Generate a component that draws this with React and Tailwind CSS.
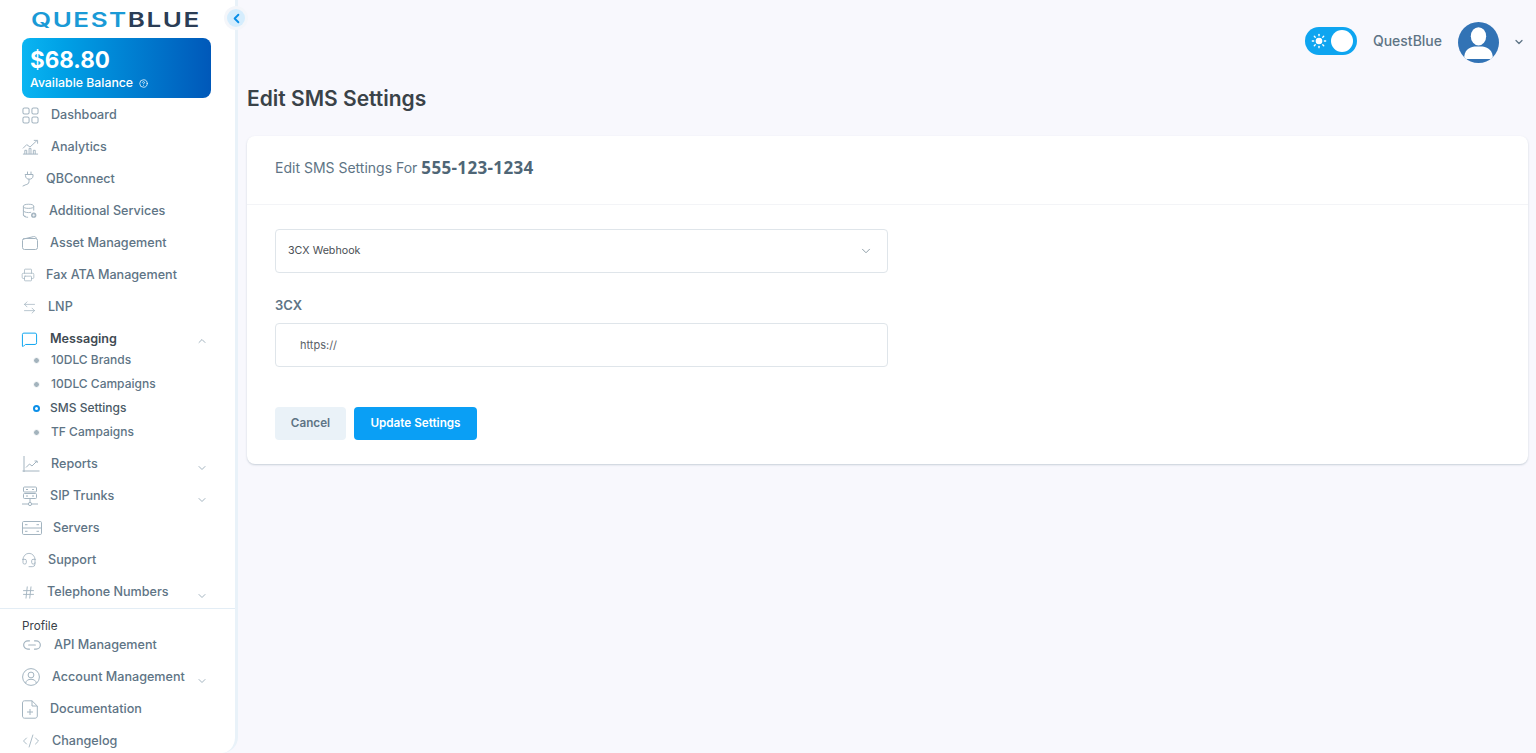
import React from 'react';
import { ChevronDown, ChevronLeft, ChevronUp, Printer, ArrowLeftRight, MessageSquare, Hash, Link2, CodeXml, Headset, Sun, CircleHelp } from 'lucide-react';

const Grid = ({ className }) => (
  <svg viewBox="0 0 18 18" fill="none" stroke="currentColor" strokeWidth="1.1" className={className}>
    <rect x="1" y="1" width="6.5" height="6.5" rx="1.6" />
    <rect x="10.5" y="1" width="6.5" height="6.5" rx="1.6" />
    <rect x="1" y="10.5" width="6.5" height="6.5" rx="1.6" />
    <rect x="10.5" y="10.5" width="6.5" height="6.5" rx="1.6" />
  </svg>
);

const Analytics = ({ className }) => (
  <svg viewBox="0 0 18 16" fill="none" stroke="currentColor" strokeWidth="1" className={className}>
    <path d="M1 15.5h16M3 15.5v-4h2v4M7.5 15.5v-6h2v6M12 15.5v-4h2v4" />
    <path d="M1 9.5l4-4 3.5 2.5L16 1M12.5 1H16.5V4.5" />
  </svg>
);

const PlugCord = ({ className }) => (
  <svg viewBox="0 0 12 16" fill="none" stroke="currentColor" strokeWidth="1" strokeLinecap="round" className={className}>
    <path d="M5.5 1v2.5M9 1v2.5M3.5 3.5h7.5v1.5c0 2-1.6 3.2-3.7 3.2S3.5 7 3.5 5z" />
    <path d="M7 8.2v2.3c0 2.4-2 3-3.2 3.2L1 15" />
  </svg>
);

const Storage = ({ className }) => (
  <svg viewBox="0 0 16 16" fill="none" stroke="currentColor" strokeWidth="1" className={className}>
    <ellipse cx="7" cy="3" rx="5.5" ry="2.2" />
    <path d="M1.5 3v9.5c0 1.2 2.4 2.2 5 2.2M1.5 7.5c0 1.2 2.4 2.2 5.5 2.2 1 0 2-.1 2.8-.4M1.5 12c0 .8 1 1.4 2.5 1.8M12.5 3v4.5" />
    <circle cx="12.5" cy="12.5" r="2.8" fill="currentColor" stroke="none" />
    <path d="M12.5 11v3M11 12.5h3" stroke="#fff" strokeWidth="0.8" />
  </svg>
);

const Folder = ({ className }) => (
  <svg viewBox="0 0 16 14" fill="none" stroke="currentColor" strokeWidth="1" className={className}>
    <rect x="0.5" y="2.5" width="15" height="11" rx="2" />
    <path d="M1 3.2L11.5 0.6c1.6-.3 2.6.4 2.8 2" />
  </svg>
);

const Reports = ({ className }) => (
  <svg viewBox="0 0 18 18" fill="none" stroke="currentColor" strokeWidth="1" className={className}>
    <path d="M2 1v16M0.5 16h17" />
    <path d="M4 12.5l3.5-3.5 2.5 2 5-5M12.5 6H15.2V8" />
  </svg>
);

const Network = ({ className }) => (
  <svg viewBox="0 0 16 20" fill="none" stroke="currentColor" strokeWidth="1" className={className}>
    <rect x="1.5" y="1" width="13" height="5" rx="1" />
    <rect x="1.5" y="7.5" width="13" height="5" rx="1" />
    <path d="M4 3.5h2M10 3.5h2M4 10h2M10 10h2M8 12.5v3.5M0 18h6M10 18h6" />
    <circle cx="8" cy="18" r="1.6" />
  </svg>
);

const Servers = ({ className }) => (
  <svg viewBox="0 0 20 14" fill="none" stroke="currentColor" strokeWidth="1" className={className}>
    <rect x="0.5" y="0.5" width="19" height="13" rx="1.2" />
    <path d="M0.5 7h19M3 3.7h2.5M14.5 3.7H17M3 10.3h2.5M14.5 10.3H17" />
  </svg>
);

const Person = ({ className }) => (
  <svg viewBox="0 0 18 18" fill="none" stroke="currentColor" strokeWidth="1" className={className}>
    <circle cx="9" cy="9" r="8.4" />
    <circle cx="9" cy="7" r="2.9" />
    <path d="M3.6 15.2c.6-2.7 2.4-3.9 5.4-3.9s4.8 1.2 5.4 3.9" />
  </svg>
);

const DocPlus = ({ className }) => (
  <svg viewBox="0 0 16 19" fill="none" stroke="currentColor" strokeWidth="1" className={className}>
    <path d="M2.5 0.8h7.5l5.3 5.2v10c0 1.3-.9 2.2-2.2 2.2H2.5c-1.2 0-2-.9-2-2.2V3c0-1.3.8-2.2 2-2.2z" />
    <path d="M10 0.8V6h5.3M8 9v6M5 12h6" />
  </svg>
);

const nav = [
  { label: 'Dashboard', icon: Grid, iconClass: 'w-[17px] h-[17px] ml-[22px] mr-[12px]' },
  { label: 'Analytics', icon: Analytics, iconClass: 'w-[17px] h-[16px] ml-[22px] mr-[12px]' },
  { label: 'QBConnect', icon: PlugCord, iconClass: 'w-[12px] h-[16px] ml-[22px] mr-[12px]' },
  { label: 'Additional Services', icon: Storage, iconClass: 'w-[15px] h-[16px] ml-[22px] mr-[12px]' },
  { label: 'Asset Management', icon: Folder, iconClass: 'w-[16px] h-[14px] ml-[22px] mr-[12px]' },
  { label: 'Fax ATA Management', icon: Printer, iconClass: 'w-[14px] h-[14px] ml-[21px] mr-[11px] stroke-[1.3]' },
  { label: 'LNP', icon: ArrowLeftRight, iconClass: 'w-[15px] h-[15px] ml-[22px] mr-[11px] stroke-[1.2]' },
];

const NavRow = ({ label, icon: Icon, iconClass, chevron, rowClass = 'h-8' }) => (
  <div className={`flex items-center ${rowClass}`}>
    <Icon className={`shrink-0 ${iconClass} text-[#a3b4c0]`} />
    <span className="text-[12.6px] font-medium text-[#5e7485]">{label}</span>
    {chevron && <ChevronDown className="w-[12px] h-[12px] ml-auto mr-[27px] mt-[7px] text-[#a3b4c0]" />}
  </div>
);

const SubRow = ({ label, active }) => (
  <div className="flex items-center h-6">
    <span className={`ml-[33px] mr-[11px] w-[7px] h-[7px] rounded-full shrink-0 ${active ? 'border-2 border-[#0b8fe8] bg-white' : 'border-[1.5px] border-white bg-[#a3b3bd]'}`} />
    <span className={`text-xs font-medium ${active ? 'text-[#4a5a66] -ml-px' : 'text-[#5e7485]'}`}>{label}</span>
  </div>
);

const Sidebar = () => (
  <aside className="w-[238px] shrink-0 h-[753px] overflow-hidden bg-white border-r-[3px] border-[#e9f2f9] rounded-br-[16px]">
    <div className="h-[38px] pl-[31px] pt-[7px] flex items-start">
      <span className="inline-block origin-left scale-x-[1.3] text-[20px] leading-[26px] font-semibold tracking-[0.06em] whitespace-nowrap text-[#1a9ad6]">
        QUEST<span className="text-[#2b3d55]">BLUE</span>
      </span>
    </div>
    <div className="ml-[22px] w-[189px] h-[60px] rounded-lg bg-gradient-to-r from-[#0bb5f2] to-[#0058b9] text-white pl-2 pt-[7px]">
      <div className="text-[22.4px] leading-[30px] font-bold">$68.80</div>
      <div className="flex items-center gap-[6px] text-[12.3px] leading-[16px] font-medium">
        Available Balance
        <CircleHelp className="w-[9px] h-[9px]" />
      </div>
    </div>
    <div className="mt-px">
      {nav.map((item) => <NavRow key={item.label} {...item} />)}
    </div>
    <div className="flex items-center h-8">
      <MessageSquare className="w-[17px] h-[17px] ml-[21px] mr-[12px] shrink-0 text-[#0ea5f0] stroke-[1.4]" />
      <span className="text-[12.6px] font-semibold text-[#3f4a52]">Messaging</span>
      <ChevronUp className="w-[12px] h-[12px] ml-auto mr-[27px] mt-1 text-[#a3b4c0]" />
    </div>
    <div className="-mt-[7px] mb-[4px]">
      <SubRow label="10DLC Brands" />
      <SubRow label="10DLC Campaigns" />
      <SubRow label="SMS Settings" active />
      <SubRow label="TF Campaigns" />
    </div>
    <NavRow label="Reports" icon={Reports} iconClass="w-[18px] h-[18px] ml-[22px] mr-[11px]" chevron />
    <NavRow label="SIP Trunks" icon={Network} iconClass="w-[16px] h-[20px] ml-[22px] mr-[12px]" chevron />
    <NavRow label="Servers" icon={Servers} iconClass="w-[20px] h-[14px] ml-[22px] mr-[11px]" />
    <NavRow label="Support" icon={Headset} iconClass="w-[16px] h-[16px] ml-[21px] mr-[11px] stroke-[1.3]" />
    <NavRow label="Telephone Numbers" icon={Hash} iconClass="w-[15px] h-[15px] ml-[21px] mr-[11px] stroke-[1.5]" chevron />
    <div className="border-t border-[#e3edf5] pt-[9px]">
      <div className="pl-[22px] text-[11.7px] leading-4 text-[#3a4248]">Profile</div>
      <NavRow label="API Management" icon={Link2} iconClass="w-[20px] h-[20px] ml-[22px] mr-[12px] stroke-[1.4]" rowClass="h-[22px] mb-[5px]" />
      <NavRow label="Account Management" icon={Person} iconClass="w-[18px] h-[18px] ml-[22px] mr-[12px]" chevron />
      <NavRow label="Documentation" icon={DocPlus} iconClass="w-[16px] h-[19px] ml-[22px] mr-[12px]" />
      <NavRow label="Changelog" icon={CodeXml} iconClass="w-[18px] h-[18px] ml-[22px] mr-[12px] stroke-[1.2]" />
    </div>
  </aside>
);

const TopBar = () => (
  <div className="h-[84px] flex items-start justify-end pt-[22px] pr-[3px]">
    <div className="mt-[5px] w-[52px] h-7 rounded-full bg-[#0ea5f0] flex items-center justify-between pl-[6px] pr-[4px]">
      <Sun className="w-[16px] h-[16px] text-white fill-white" />
      <span className="w-[22px] h-[22px] rounded-full bg-white" />
    </div>
    <span className="mt-[10px] ml-4 text-sm leading-[18px] font-medium text-[#5e7485]">QuestBlue</span>
    <svg viewBox="0 0 40 40" className="ml-[16px] w-[41px] h-[41px] shrink-0">
      <clipPath id="avatar"><circle cx="20" cy="20" r="20" /></clipPath>
      <circle cx="20" cy="20" r="20" fill="#3273b5" />
      <g clipPath="url(#avatar)" fill="#fff">
        <ellipse cx="20" cy="14" rx="7.5" ry="9" />
        <path d="M6 36c0-8 4-11 10-12h8c6 1 10 4 10 12z" />
      </g>
    </svg>
    <ChevronDown className="ml-[14px] mt-[14px] w-[12px] h-[12px] text-[#5e7485] stroke-[2.5]" />
  </div>
);

const Card = () => (
  <div className="h-[328px] rounded-lg bg-white shadow-[0_1px_2px_rgba(90,113,132,0.3)]">
    <div className="h-[69px] border-b border-[#f3f4f7] pl-7 pb-1 flex items-center">
      <span className="text-sm text-[#5e7485]">Edit SMS Settings For</span>
      <span className="ml-1 text-[17px] font-bold text-[#4f6676] tracking-[0.02em] font-['Open_Sans',sans-serif]">555-123-1234</span>
    </div>
    <div className="pl-7 pt-6">
      <div className="w-[613px] h-[44px] border border-[#dfe5ea] rounded flex items-center justify-between pl-3 pr-[14px]">
        <span className="text-[10.7px] text-[#4a4f55]">3CX Webhook</span>
        <ChevronDown className="w-[14px] h-[14px] text-[#7f909c] stroke-[1.5]" />
      </div>
      <div className="mt-[24px] text-[13px] leading-[16px] font-semibold text-[#5e7485]">3CX</div>
      <div className="mt-[10px] w-[613px] h-[44px] border border-[#dfe5ea] rounded flex items-center pl-6">
        <span className="text-[11px] text-[#5b6268]">https://</span>
      </div>
      <div className="mt-10 flex gap-2">
        <button className="w-[71px] h-[33px] rounded bg-[#eaf2f8] text-[11.7px] font-semibold text-[#5e7485]">Cancel</button>
        <button className="w-[123px] h-[33px] rounded bg-[#0a9ff5] text-[11.7px] font-semibold text-white">Update Settings</button>
      </div>
    </div>
  </div>
);

export default function App() {
  return (
    <div className="relative flex h-[753px] overflow-hidden bg-[#f8f8fd] font-['Inter',sans-serif]">
      <Sidebar />
      <main className="flex-1 min-w-0 pl-[9px] pr-2">
        <TopBar />
        <h1 className="h-[30px] text-[21px] leading-[30px] font-semibold text-[#3a4248]">Edit SMS Settings</h1>
        <div className="mt-[22px]">
          <Card />
        </div>
      </main>
      <div className="absolute left-[227px] top-[9px] w-[18px] h-[18px] rounded-full bg-[#d5edfd] ring-[3px] ring-[#f4f6fa] flex items-center justify-center">
        <ChevronLeft className="w-[15px] h-[15px] text-[#0b8fe8] stroke-[3]" />
      </div>
    </div>
  );
}
